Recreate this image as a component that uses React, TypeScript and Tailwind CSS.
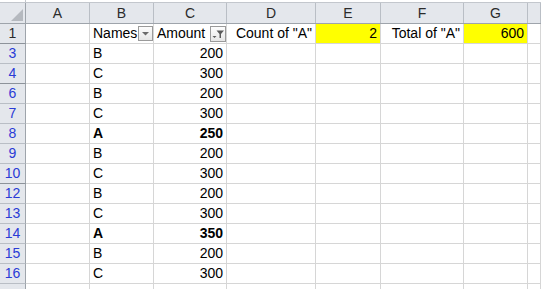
import React from "react";

const widths = [64, 64, 73, 89, 65, 83, 64];
const letters = ["A", "B", "C", "D", "E", "F", "G"];

type Row = { n: number; name: string; amt: string; bold?: boolean; gapAfter?: boolean };

const rows: Row[] = [
  { n: 3, name: "B", amt: "200", gapAfter: true },
  { n: 4, name: "C", amt: "300" },
  { n: 6, name: "B", amt: "200" },
  { n: 7, name: "C", amt: "300" },
  { n: 8, name: "A", amt: "250", bold: true },
  { n: 9, name: "B", amt: "200" },
  { n: 10, name: "C", amt: "300" },
  { n: 12, name: "B", amt: "200" },
  { n: 13, name: "C", amt: "300" },
  { n: 14, name: "A", amt: "350", bold: true },
  { n: 15, name: "B", amt: "200" },
  { n: 16, name: "C", amt: "300" },
];

const hiddenAbove = new Set([3, 6, 12]);

function RowHead({ n, blue, dark }: { n: number | string; blue?: boolean; dark?: boolean }) {
  return (
    <div
      className={`w-[26px] shrink-0 flex items-center justify-center bg-[#e4e7ec] border-r border-r-[#9ea4ab] border-b ${
        dark ? "border-b-[#8d939a]" : "border-b-[#b9bec5]"
      } ${blue ? "text-[#2a3bd6]" : "text-[#2b2b2b]"}`}
    >
      {n}
    </div>
  );
}

function Cell({
  w,
  children,
  right,
  bold,
  yellow,
  className = "",
}: {
  w?: number;
  children?: React.ReactNode;
  right?: boolean;
  bold?: boolean;
  yellow?: boolean;
  className?: string;
}) {
  return (
    <div
      className={`${w ? "shrink-0" : "flex-1"} flex items-center border-r border-b border-[#d6d6d6] ${
        right ? "justify-end pr-[3px]" : "pl-[3px]"
      } ${bold ? "font-bold" : ""} ${yellow ? "bg-[#ffff00]" : "bg-white"} ${className}`}
      style={w ? { width: w } : undefined}
    >
      {children}
    </div>
  );
}

function DropBtn() {
  return (
    <div className="ml-auto w-[15px] h-[15px] border border-[#9a9a9a] bg-gradient-to-b from-[#fdfdfd] to-[#e6e6e6] flex items-center justify-center">
      <svg width="13" height="13" viewBox="0 0 13 13">
        <polygon points="3,5 10,5 6.5,8.5" fill="#6b6b6b" />
      </svg>
    </div>
  );
}

function FilterBtn() {
  return (
    <div className="ml-auto w-[16px] h-[16px] border border-[#9a9a9a] bg-gradient-to-b from-[#fdfdfd] to-[#e6e6e6] flex items-center justify-center">
      <svg width="14" height="14" viewBox="0 0 14 14">
        <polygon points="1.5,9 5.5,9 3.5,11" fill="#5a5a5a" />
        <polygon points="5.5,3.5 13,3.5 10,7 10,11 8.5,11 8.5,7" fill="#5a5a5a" />
      </svg>
    </div>
  );
}

export default function App() {
  return (
    <div
      className="w-[541px] h-[289px] overflow-hidden bg-white text-[14px] text-black"
      style={{ fontFamily: '"Liberation Sans", Arial, sans-serif' }}
    >
      <div className="h-[3px] bg-white border-b border-[#c3c7cd] flex">
        <div className="w-[26px] border-r border-[#c3c7cd]" />
      </div>
      {/* column headers */}
      <div className="flex h-[21px] bg-[#e4e7ec] border-b border-[#9ea4ab] text-[#2b2b2b]">
        <div className="w-[26px] shrink-0 border-r border-[#9ea4ab] relative">
          <svg className="absolute right-[2px] bottom-[2px]" width="12" height="12" viewBox="0 0 12 12">
            <polygon points="12,0 12,12 0,12" fill="#b5b9bf" />
          </svg>
        </div>
        {letters.map((l, i) => (
          <div
            key={l}
            className="shrink-0 flex items-center justify-center border-r border-[#b9bec5]"
            style={{ width: widths[i] }}
          >
            {l}
          </div>
        ))}
        <div className="flex-1 border-r border-[#b9bec5]" />
      </div>
      {/* row 1 */}
      <div className="flex h-[20px]">
        <RowHead n={1} dark />
        <Cell w={widths[0]} />
        <Cell w={widths[1]} className="pr-0">
          <span>Names</span>
          <DropBtn />
        </Cell>
        <Cell w={widths[2]} className="pr-0">
          <span>Amount</span>
          <FilterBtn />
        </Cell>
        <Cell w={widths[3]} right>
          Count of "A"
        </Cell>
        <Cell w={widths[4]} right yellow>
          2
        </Cell>
        <Cell w={widths[5]} right>
          Total of "A"
        </Cell>
        <Cell w={widths[6]} right yellow>
          600
        </Cell>
        <Cell />
      </div>
      {rows.map((r, idx) => {
        const next = rows[idx + 1];
        const dark = next ? hiddenAbove.has(next.n) : false;
        return (
          <div key={r.n} className="flex h-[20px]">
            <RowHead n={r.n} blue dark={dark} />
            <Cell w={widths[0]} />
            <Cell w={widths[1]} bold={r.bold}>
              {r.name}
            </Cell>
            <Cell w={widths[2]} right bold={r.bold}>
              {r.amt}
            </Cell>
            <Cell w={widths[3]} />
            <Cell w={widths[4]} />
            <Cell w={widths[5]} />
            <Cell w={widths[6]} />
            <Cell />
          </div>
        );
      })}
      <div className="flex h-[20px]">
        <RowHead n="" />
        {widths.map((w, i) => (
          <Cell key={i} w={w} />
        ))}
        <Cell />
      </div>
    </div>
  );
}
